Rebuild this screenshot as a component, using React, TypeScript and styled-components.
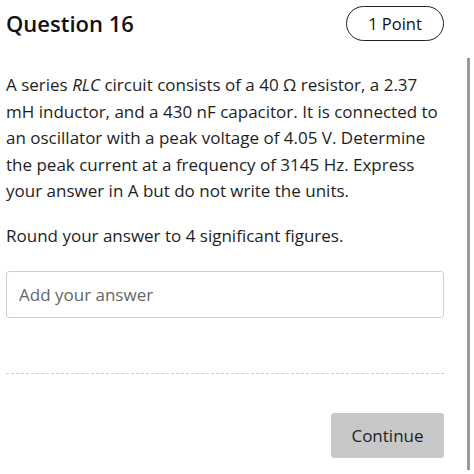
import styled, { createGlobalStyle } from 'styled-components';

const GlobalStyle = createGlobalStyle`
  html, body {
    margin: 0;
    padding: 0;
    background: #fff;
  }
  body {
    font-family: "Open Sans", "Liberation Sans", sans-serif;
    color: #1a1a1a;
  }
`;

export default function App() {
    return (
        <Page>
            <GlobalStyle />
            <Header>
                <Title>Question 16</Title>
                <PointBadge>1 Point</PointBadge>
            </Header>
            <Body>
                <Prompt>
                    A series <em>RLC</em> circuit consists of a 40 Ω resistor, a 2.37 mH inductor, and a 430 nF capacitor. It is connected to an oscillator with a peak voltage of 4.05 V. Determine the peak current at a frequency of 3145 Hz. Express your answer in A but do not write the units.
                </Prompt>
                <Prompt>Round your answer to 4 significant figures.</Prompt>
                <AnswerInput placeholder="Add your answer" />
                <Divider />
                <Footer>
                    <ContinueButton>Continue</ContinueButton>
                </Footer>
            </Body>
            <ScrollThumb />
        </Page>
    );
}

const Page = styled.div`
    position: relative;
    width: 474px;
    height: 474px;
    overflow: hidden;
    box-sizing: border-box;
    padding: 5px 30px 0 6px;
`;

const Header = styled.div`
    display: flex;
    justify-content: space-between;
    align-items: center;
    height: 36px;
`;

const Title = styled.h1`
    margin: 0;
    font-size: 22px;
    font-weight: 600;
    color: #111;
`;

const PointBadge = styled.span`
    display: flex;
    align-items: center;
    justify-content: center;
    width: 98px;
    height: 35px;
    box-sizing: border-box;
    border: 1.5px solid #222;
    border-radius: 18px;
    font-size: 16.5px;
    color: #111;
`;

const Body = styled.div`
    padding-top: 31px;
`;

const Prompt = styled.p`
    margin: 0 0 18px;
    font-size: 17px;
    line-height: 26.5px;
    color: #1e1e1e;
`;

const AnswerInput = styled.input`
    display: block;
    width: 100%;
    height: 47px;
    box-sizing: border-box;
    margin-top: 22px;
    padding: 0 12px;
    border: 1px solid #cfcfcf;
    border-radius: 3px;
    font-family: inherit;
    font-size: 17px;
    outline: none;
    &::placeholder {
        color: #666;
    }
`;

const Divider = styled.div`
    margin-top: 55px;
    border-top: 1px dashed #cdcdcd;
`;

const Footer = styled.div`
    display: flex;
    justify-content: flex-end;
    margin-top: 39px;
`;

const ContinueButton = styled.button`
    width: 113px;
    height: 45px;
    border: none;
    border-radius: 3px;
    background: #c8c8c8;
    font-family: inherit;
    font-size: 17px;
    color: #1e1e1e;
`;

const ScrollThumb = styled.div`
    position: absolute;
    left: 467px;
    top: 58px;
    width: 3px;
    height: 412px;
    background: #9a9a9a;
`;
